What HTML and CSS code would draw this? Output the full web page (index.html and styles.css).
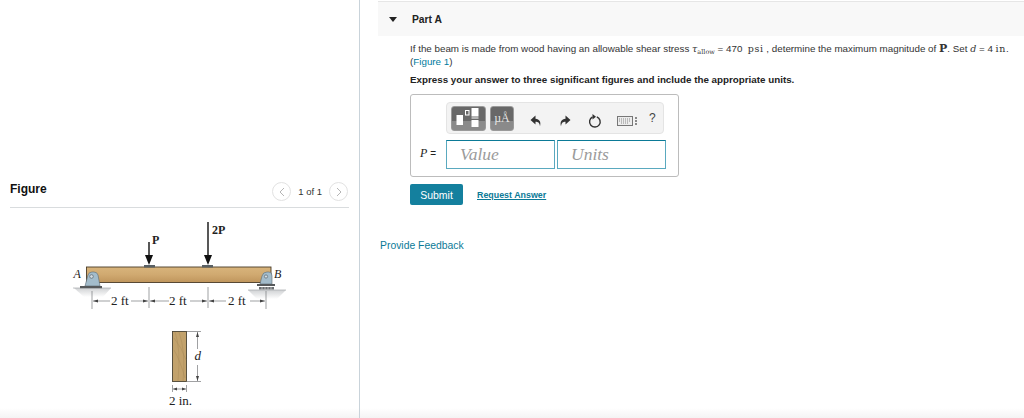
FILE: index.html
```html
<!DOCTYPE html>
<html lang="en">
<head>
  <meta charset="UTF-8" />
  <title>Part A</title>
  <link rel="stylesheet" href="styles.css">
</head>
<body>

  <aside class="figure-pane">
    <div class="figure-head">
      <h2>Figure</h2>
      <div class="pager">
        <span class="pager-btn"><svg width="8" height="10" viewBox="0 0 8 10"><path d="M6 1 2 5l4 4" fill="none" stroke="#b5b5b5" stroke-width="1"/></svg></span>
        <span class="pager-text">1 of 1</span>
        <span class="pager-btn"><svg width="8" height="10" viewBox="0 0 8 10"><path d="M2 1l4 4-4 4" fill="none" stroke="#b5b5b5" stroke-width="1"/></svg></span>
      </div>
    </div>

    <svg class="diagram" width="240" height="195" viewBox="60 215 240 195">
      <defs>
        <linearGradient id="wood" x1="0" y1="0" x2="0" y2="1">
          <stop offset="0" stop-color="#d8b47c"/>
          <stop offset="0.5" stop-color="#d0a970"/>
          <stop offset="1" stop-color="#bf955c"/>
        </linearGradient>
        <linearGradient id="ground" x1="0" y1="0" x2="0" y2="1">
          <stop offset="0" stop-color="#d0d2d4"/>
          <stop offset="1" stop-color="#ffffff"/>
        </linearGradient>
      </defs>

      <!-- ground -->
      <path d="M74 288h37l-8 9H84z" fill="url(#ground)"/>
      <path d="M248 290h38l-9 9h-20z" fill="url(#ground)"/>
      <path d="M73 288h38M248 290h38" stroke="#a8aaac" stroke-width="0.7"/>

      <!-- beam -->
      <rect x="86.500" y="267" width="184.500" height="15.500" fill="url(#wood)" stroke="#4a3c28" stroke-width="0.9"/>
      <rect x="144" y="265" width="11" height="2.500" fill="#596064"/>
      <rect x="202" y="265" width="11" height="2.500" fill="#596064"/>

      <!-- left support -->
      <path d="M85 286l3-11q1-3 4-3h2q3 0 4 3l2 11z" fill="#a3bccb" stroke="#5c6a72" stroke-width="0.6"/>
      <circle cx="91.500" cy="276.500" r="1.800" fill="#d5dde2" stroke="#4c565c" stroke-width="0.6"/>
      <rect x="80" y="286" width="22" height="2.200" fill="#56595b"/>

      <!-- right support -->
      <path d="M260 284l2-8q1-4 5-4h2q3 0 3 4v8z" fill="#a3bccb" stroke="#5c6a72" stroke-width="0.6"/>
      <circle cx="266" cy="276.500" r="1.600" fill="#d5dde2" stroke="#4c565c" stroke-width="0.6"/>
      <rect x="257" y="284" width="18" height="2" fill="#56595b"/>
      <path d="M259 287h15v2.500h-15z" fill="#6b6f72"/>
      <path d="M262 287v2.500M265 287v2.500M268 287v2.500M271 287v2.500" stroke="#d7d7d7" stroke-width="0.7"/>

      <!-- loads -->
      <path d="M149 242v17" stroke="#111" stroke-width="1.400"/>
      <path d="M145 255h8l-4 10z" fill="#111"/>
      <path d="M208 222v36" stroke="#111" stroke-width="1.400"/>
      <path d="M204 255h8l-4 10z" fill="#111"/>
      <text class="t-bold" x="152" y="244">P</text>
      <text class="t-bold" x="212" y="234">2P</text>
      <text class="t-italic" x="73.500" y="278">A</text>
      <text class="t-italic" x="274" y="278">B</text>

      <!-- span dimensions -->
      <path d="M92 291v18M149 287v21M208 287v21M266 291v18" stroke="#77797b" stroke-width="0.7"/>
      <path d="M93 301h17M131 301h17M150 301h19M190 301h17M209 301h17M250 301h15" stroke="#77797b" stroke-width="0.7"/>
      <path d="M93 301l5-1.500v3zM148 301l-5-1.500v3zM150 301l5-1.500v3zM207 301l-5-1.500v3zM209 301l5-1.500v3zM265 301l-5-1.500v3z" fill="#444"/>
      <text class="t-dim" x="111" y="305">2 ft</text>
      <text class="t-dim" x="169" y="305">2 ft</text>
      <text class="t-dim" x="228" y="305">2 ft</text>

      <!-- cross section -->
      <rect x="172.500" y="331.500" width="14" height="50" fill="#c2a26c" stroke="#4a4434" stroke-width="0.9"/>
      <path d="M175 332q6 16 3 49M179 332q7 20 4 49M174 350q6 10 11 28M174 338q8 10 12 22" fill="none" stroke="#ab8d5a" stroke-width="0.5"/>
      <path d="M187 331.500h14M187 381.500h14" stroke="#77797b" stroke-width="0.7"/>
      <path d="M197.500 332v17M197.500 365v16" stroke="#77797b" stroke-width="0.7"/>
      <path d="M197.500 332l-1.500 5h3zM197.500 381l-1.500-5h3z" fill="#444"/>
      <text class="t-italic-d" x="194.500" y="360">d</text>
      <path d="M172.500 385v7M186.500 385v7M173 389h13" stroke="#77797b" stroke-width="0.7"/>
      <path d="M173 389l4-1.500v3zM186 389l-4-1.500v3z" fill="#444"/>
      <text class="t-in" x="169" y="405">2 in.</text>
    </svg>
  </aside>

  <main class="question-pane">
    <div class="part-head">
      <span class="caret"></span>
      <h3>Part A</h3>
    </div>

    <div class="part-body">
      <p class="prompt">If the beam is made from wood having an allowable shear stress <span class="math"><i>&tau;</i><sub>allow</sub></span> = 470 &nbsp;<span class="math math-unit">psi</span> , determine the maximum magnitude of <span class="math math-bold"><b>P</b></span>. Set <span class="math"><i>d</i></span> = 4 <span class="math math-unit">in</span>.<br>(<a href="#figure">Figure 1</a>)</p>
      <p class="instruction">Express your answer to three significant figures and include the appropriate units.</p>

      <div class="answer-box">
        <div class="toolbar">
          <span class="tool-btn tool-templates">
            <svg width="28" height="20" viewBox="0 0 28 20">
              <rect x="1.500" y="7" width="6.500" height="10" fill="#fff"/>
              <rect x="10.500" y="2.500" width="3.500" height="4.500" fill="none" stroke="#fff" stroke-width="1"/>
              <rect x="16.500" y="0" width="7" height="8.500" fill="#fff"/>
              <rect x="16.500" y="9.500" width="7" height="1" fill="#fff"/>
              <rect x="16.500" y="12" width="7" height="7" fill="#fff"/>
            </svg>
          </span>
          <span class="tool-btn tool-units">&micro;&Aring;</span>
          <svg class="tool-icon tool-undo" width="12" height="12" viewBox="0 0 12 12"><path d="M5.500 0.500 0.500 5 5.500 9.500V6.800c2.500 0 4 .8 4.500 4.400 1.200-4-.5-7.200-4.500-7.400z" fill="#333"/></svg>
          <svg class="tool-icon" width="12" height="12" viewBox="0 0 12 12"><path d="M6.500 0.500l5 4.500-5 4.500V6.800c-2.500 0-4 .8-4.500 4.400-1.200-4 .5-7.200 4.500-7.400z" fill="#333"/></svg>
          <svg class="tool-icon tool-reset" width="14" height="14" viewBox="0 0 14 14"><path d="M8.800 2.800A5.300 5.300 0 1 1 4.500 3" fill="none" stroke="#333" stroke-width="1.400"/><path d="M4.500 0v5.500l3.500-2.800z" fill="#333"/></svg>
          <svg class="tool-icon tool-keys" width="22" height="10" viewBox="0 0 22 10"><rect x="0.500" y="0.500" width="15" height="9" fill="#ececec" stroke="#777"/><path d="M2 3h12M2 5h12M4 7h8" stroke="#888" stroke-dasharray="1 1"/><path d="M19 1v2M19 4v2M19 7v2" stroke="#444" stroke-width="1.200"/></svg>
          <span class="tool-help">?</span>
        </div>
        <div class="answer-row">
          <label class="answer-label"><i>P</i> <span>=</span></label>
          <div class="answer-input">Value</div>
          <div class="answer-input">Units</div>
        </div>
      </div>

      <div class="actions">
        <button class="submit-btn">Submit</button>
        <a class="request-link" href="#answer">Request Answer</a>
      </div>
    </div>

    <a class="feedback" href="#feedback">Provide Feedback</a>
  </main>

</body>
</html>
```

FILE: styles.css
```css
html, body {
  margin: 0;
  height: 418px;
  overflow: hidden;
}

body {
  display: flex;
  font-family: "Liberation Sans", Arial, sans-serif;
  color: #222;
  background: linear-gradient(to bottom, #ffffff 408px, #f4f4f4 418px);
}

.figure-pane {
  width: 360px;
  height: 418px;
  flex-shrink: 0;
  box-sizing: border-box;
  padding: 180px 10px 0;
  border-right: 1px solid #c9d3da;
}

.figure-head {
  display: flex;
  justify-content: space-between;
  align-items: center;
  width: 339px;
  height: 27px;
  border-bottom: 1px solid #d9dcde;
}

.figure-head h2 {
  margin: 0 0 9px;
  font-size: 12px;
  font-weight: bold;
  color: #111;
}

.pager {
  display: flex;
  align-items: center;
  gap: 7px;
  margin: 0 1px 4px 0;
}

.pager-btn {
  display: flex;
  align-items: center;
  justify-content: center;
  width: 17px;
  height: 17px;
  border: 1px solid #e2e2e2;
  border-radius: 50%;
}

.pager-text {
  font-size: 9.500px;
  color: #333;
}

.diagram {
  display: block;
  margin: 7px 0 0 50px;
}

.diagram text {
  font-family: "Liberation Serif", "Times New Roman", serif;
  fill: #222;
}

.t-bold {
  font-size: 12px;
  font-weight: bold;
}

.t-italic {
  font-size: 12px;
  font-style: italic;
}

.t-italic-d {
  font-size: 13px;
  font-style: italic;
}

.t-dim {
  font-size: 13px;
}

.t-in {
  font-size: 13px;
}

.question-pane {
  flex: 1;
  padding: 1px 0 0 18px;
}

.part-head {
  display: flex;
  align-items: center;
  height: 34px;
  border-top: 1px solid #e6e6e6;
  background-color: #f8f8f8;
}

.caret {
  width: 0;
  height: 0;
  margin-left: 11px;
  border-left: 4px solid transparent;
  border-right: 4px solid transparent;
  border-top: 5px solid #222;
}

.part-head h3 {
  margin: 0 0 0 15px;
  font-size: 10.300px;
  font-weight: bold;
  color: #222;
}

.part-body {
  padding: 6px 0 0 32px;
}

.prompt {
  margin: 0;
  font-size: 9.800px;
  line-height: 13px;
  color: #333;
  white-space: nowrap;
}

.math {
  font-family: "DejaVu Serif", "Liberation Serif", serif;
  font-size: 9.500px;
}

.math sub {
  font-size: 6.500px;
  line-height: 0;
  vertical-align: -2px;
}

.math-unit {
  letter-spacing: 0.600px;
}

.math-bold {
  font-size: 11px;
}

.prompt a {
  color: #007c9e;
  text-decoration: none;
}

.instruction {
  margin: 6px 0 8px;
  font-size: 9.800px;
  line-height: 12px;
  font-weight: bold;
  color: #222;
}

.answer-box {
  box-sizing: border-box;
  width: 269px;
  height: 83px;
  padding: 7px 12px 0 9px;
  border: 1px solid #bcbcbc;
  border-radius: 3px;
}

.toolbar {
  display: flex;
  align-items: center;
  box-sizing: border-box;
  width: 218px;
  height: 32px;
  margin-left: 26px;
  padding: 0 4px;
  background-color: #f3f3f3;
  border: 1px solid #e4e4e4;
  border-radius: 4px;
}

.tool-btn {
  display: flex;
  align-items: center;
  justify-content: center;
  box-sizing: border-box;
  height: 25px;
  border-radius: 3px;
  background: linear-gradient(to bottom, #686868 0, #686868 60%, #8a8a8a 60%, #8a8a8a 100%);
  border: 1px solid #9a9a9a;
  color: #e6e6e6;
}

.tool-templates {
  width: 35px;
}

.tool-units {
  width: 24px;
  margin-left: 4px;
  font-family: "Liberation Serif", serif;
  font-size: 12px;
}

.tool-icon {
  flex-shrink: 0;
  margin: 6px 0 0 17px;
}

.tool-undo {
  margin-left: 16px;
}

.tool-keys {
  margin-left: 15px;
}

.tool-help {
  margin: 0 0 0 10px;
  font-size: 12px;
  color: #444;
}

.answer-row {
  display: flex;
  align-items: center;
  gap: 2px;
  margin-top: 6px;
}

.answer-label {
  width: 24px;
  padding-bottom: 2px;
  font-family: "Liberation Serif", serif;
  font-size: 12px;
  color: #222;
  white-space: nowrap;
}

.answer-label span {
  font-family: "Liberation Sans", sans-serif;
  font-size: 10px;
}

.answer-input {
  display: flex;
  align-items: center;
  box-sizing: border-box;
  width: 109px;
  height: 29px;
  padding: 0 0 0 13px;
  border: 1px solid #5aa9bf;
  border-top-color: #0b7a97;
  font-family: "Liberation Serif", serif;
  font-style: italic;
  font-size: 17.500px;
  color: #9b9b9b;
}

.actions {
  display: flex;
  align-items: center;
  gap: 14px;
  margin-top: 7px;
}

.submit-btn {
  width: 53px;
  height: 21px;
  padding: 0;
  border: none;
  border-radius: 2px;
  background-color: #14809e;
  color: #fff;
  font-family: "Liberation Sans", sans-serif;
  font-size: 10.500px;
}

.request-link {
  font-size: 8.900px;
  font-weight: bold;
  color: #0b7a97;
}

.feedback {
  display: inline-block;
  margin: 35px 0 0 2px;
  font-size: 10.400px;
  color: #0b7a97;
  text-decoration: none;
}
```
